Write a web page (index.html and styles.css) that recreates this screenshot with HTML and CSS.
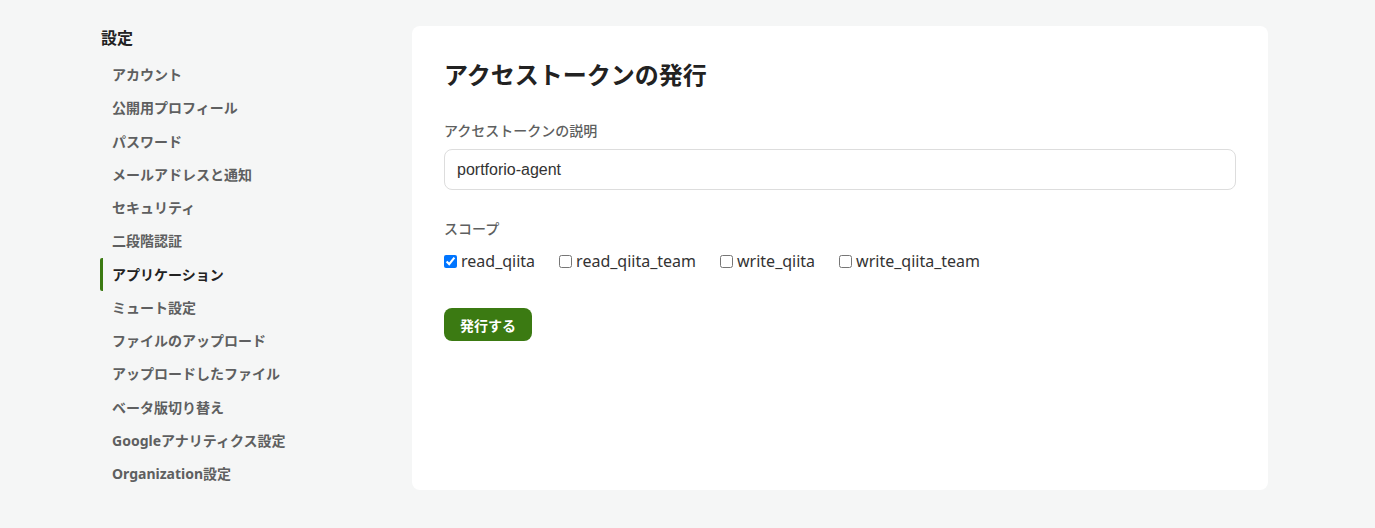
FILE: index.html
```html
<html>
<head>
  <meta charset="utf-8">
  <link rel="stylesheet" href="styles.css">
</head>
<body>
  <div class="page">
    <nav class="sidebar">
      <h2 class="side-title">設定</h2>
      <ul class="side-menu">
        <li class="side-item">アカウント</li>
        <li class="side-item">公開用プロフィール</li>
        <li class="side-item">パスワード</li>
        <li class="side-item">メールアドレスと通知</li>
        <li class="side-item">セキュリティ</li>
        <li class="side-item">二段階認証</li>
        <li class="side-item active">アプリケーション</li>
        <li class="side-item">ミュート設定</li>
        <li class="side-item">ファイルのアップロード</li>
        <li class="side-item">アップロードしたファイル</li>
        <li class="side-item">ベータ版切り替え</li>
        <li class="side-item">Googleアナリティクス設定</li>
        <li class="side-item">Organization設定</li>
      </ul>
    </nav>
    <main class="card">
      <h1 class="card-title">アクセストークンの発行</h1>
      <label class="field-label">アクセストークンの説明</label>
      <input class="text-input" type="text" value="portforio-agent">
      <div class="field-label scope-label">スコープ</div>
      <div class="scopes">
        <label class="scope"><input type="checkbox" checked>read_qiita</label>
        <label class="scope"><input type="checkbox">read_qiita_team</label>
        <label class="scope"><input type="checkbox">write_qiita</label>
        <label class="scope"><input type="checkbox">write_qiita_team</label>
      </div>
      <button class="submit">発行する</button>
    </main>
  </div>
</body>
</html>
```

FILE: styles.css
```css
body {
  margin: 0;
  background-color: #f5f6f6;
  font-family: "Noto Sans", "Noto Sans CJK JP", sans-serif;
  color: #222;
}
.page {
  display: flex;
  padding: 26px 0 0 100px;
}
.sidebar {
  width: 312px;
  flex-shrink: 0;
}
.side-title {
  margin: 0 0 8px 1px;
  font-size: 16px;
  line-height: 24px;
  font-weight: bold;
}
.side-menu {
  list-style: none;
  margin: 0;
  padding: 0;
}
.side-item {
  padding: 6px 0 6px 9px;
  border-left: 3px solid transparent;
  border-radius: 2px;
  font-size: 14px;
  line-height: 21.25px;
  font-weight: bold;
  color: #5e5f60;
}
.active {
  border-left-color: #3b7a12;
  color: #222;
}
.card {
  width: 792px;
  height: 400px;
  padding: 32px;
  background-color: white;
  border-radius: 8px;
}
.card-title {
  margin: 0 0 28px 0;
  font-size: 24px;
  line-height: 34px;
  font-weight: bold;
}
.field-label {
  display: block;
  font-size: 14px;
  line-height: 21px;
  font-weight: 500;
  color: #5e5f60;
  margin-bottom: 8px;
}
.text-input {
  display: block;
  width: 100%;
  height: 41px;
  box-sizing: border-box;
  padding: 0 12px;
  border: 1px solid #ddd;
  border-radius: 8px;
  font-family: "Liberation Sans", Arial, sans-serif;
  font-size: 16px;
  color: #333;
}
.scope-label {
  margin-top: 28px;
  margin-bottom: 10px;
}
.scopes {
  display: flex;
  gap: 24px;
}
.scope {
  display: flex;
  align-items: center;
  font-size: 16px;
  line-height: 24px;
  color: #333;
}
.scope input {
  width: 13px;
  height: 13px;
  margin: 0 4px 0 0;
}
.submit {
  margin-top: 35px;
  height: 33px;
  padding: 0 16px;
  border: none;
  border-radius: 8px;
  background-color: #3b7a12;
  color: white;
  font-family: "Noto Sans", "Noto Sans CJK JP", sans-serif;
  font-size: 14px;
  font-weight: bold;
}
```
